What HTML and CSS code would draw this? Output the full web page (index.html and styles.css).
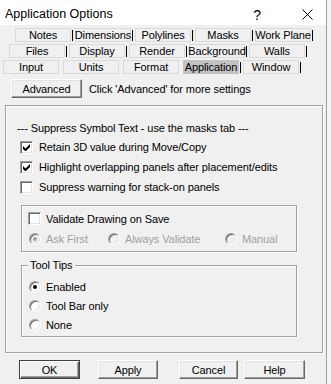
FILE: index.html
```html
<!DOCTYPE html>
<html>
<head>
<meta charset="utf-8">
<link rel="stylesheet" href="styles.css">
</head>
<body>
<div class="window">
  <div class="titlebar">
    <span class="title">Application Options</span>
    <span class="help">?</span>
    <span class="close"><svg width="11" height="11" viewBox="0 0 11 11"><path d="M0.5 0.5 L10.5 10.5 M10.5 0.5 L0.5 10.5" stroke="#000" stroke-width="1" fill="none"/></svg></span>
  </div>
  <div class="tabs">
    <div class="tabrow r1">
      <div class="tab"><span class="lbl">Notes</span><span class="sep"></span></div>
      <div class="tab"><span class="lbl">Dimensions</span><span class="sep"></span></div>
      <div class="tab"><span class="lbl">Polylines</span><span class="sep"></span></div>
      <div class="tab"><span class="lbl">Masks</span><span class="sep"></span></div>
      <div class="tab"><span class="lbl">Work Plane</span><span class="sep"></span></div>
    </div>
    <div class="tabrow r2">
      <div class="tab"><span class="lbl">Files</span><span class="sep"></span></div>
      <div class="tab"><span class="lbl">Display</span><span class="sep"></span></div>
      <div class="tab"><span class="lbl">Render</span><span class="sep"></span></div>
      <div class="tab"><span class="lbl">Background</span><span class="sep"></span></div>
      <div class="tab"><span class="lbl">Walls</span><span class="sep"></span></div>
    </div>
    <div class="tabrow r3">
      <div class="tab"><span class="lbl">Input</span></div>
      <div class="tab"><span class="lbl">Units</span></div>
      <div class="tab"><span class="lbl">Format</span></div>
      <div class="tab"><span class="lbl sel">Application</span><span class="sep"></span></div>
      <div class="tab"><span class="lbl">Window</span><span class="sep"></span></div>
    </div>
  </div>
  <div class="adv-row">
    <div class="btn adv">Advanced</div>
    <span>Click 'Advanced' for more settings</span>
  </div>
  <div class="group outer">
    <div class="note">--- Suppress Symbol Text - use the masks tab ---</div>
    <div class="cbrow first"><span class="cb"><svg width="9" height="9" viewBox="0 0 9 9"><path d="M1 3 L3.5 5.5 L8 1 L8 4 L4 8 L3 8 L1 6 Z" fill="#000"/></svg></span><span>Retain 3D value during Move/Copy</span></div>
    <div class="cbrow"><span class="cb"><svg width="9" height="9" viewBox="0 0 9 9"><path d="M1 3 L3.5 5.5 L8 1 L8 4 L4 8 L3 8 L1 6 Z" fill="#000"/></svg></span><span>Highlight overlapping panels after placement/edits</span></div>
    <div class="cbrow"><span class="cb"></span><span>Suppress warning for stack-on panels</span></div>
    <div class="group validate">
      <div class="cbrow"><span class="cb"></span><span>Validate Drawing on Save</span></div>
      <div class="radios">
        <div class="rd w1 dis"><span class="radio on"></span><span>Ask First</span></div>
        <div class="rd w2 dis"><span class="radio"></span><span>Always Validate</span></div>
        <div class="rd dis"><span class="radio"></span><span>Manual</span></div>
      </div>
    </div>
    <fieldset class="tips">
      <legend>Tool Tips</legend>
      <div class="rd"><span class="radio on"></span><span>Enabled</span></div>
      <div class="rd"><span class="radio"></span><span>Tool Bar only</span></div>
      <div class="rd"><span class="radio"></span><span>None</span></div>
    </fieldset>
  </div>
  <div class="buttons">
    <div class="btn default b-ok">OK</div>
    <div class="btn b-apply">Apply</div>
    <div class="btn b-cancel">Cancel</div>
    <div class="btn b-help">Help</div>
  </div>
</div>
</body>
</html>
```
FILE: styles.css
```css
body {
  margin: 0;
  background: #f4f4f4;
  font-family: "Liberation Sans", Arial, sans-serif;
  font-size: 11px;
  letter-spacing: -0.1px;
  color: #000;
}
.window {
  width: 327px;
  height: 384px;
  box-sizing: border-box;
  background: #f0f0f0;
  border-right: 1px solid #a0a0a0;
  display: flex;
  flex-direction: column;
}
.titlebar {
  height: 25px;
  flex: none;
  background: #fff;
  display: flex;
  align-items: flex-start;
}
.title {
  padding: 3px 0 0 5px;
  line-height: 22px;
  font-size: 12.5px;
  letter-spacing: 0;
}
.help {
  margin-left: auto;
  margin-right: 41px;
  padding-top: 7px;
  font-size: 14px;
  line-height: 16px;
  letter-spacing: 0;
}
.close {
  margin-right: 13px;
  margin-top: 9px;
  display: flex;
}
.tabs {
  display: flex;
  flex-direction: column;
  gap: 2px;
  margin-top: 3px;
}
.tabrow {
  display: flex;
  height: 14px;
}
.r1 { padding-left: 15px; }
.r2 { padding-left: 9px; }
.r3 { padding-left: 3px; }
.tab {
  width: 60px;
  flex: none;
  display: flex;
  align-items: center;
}
.lbl {
  width: 56px;
  height: 14px;
  flex: none;
  box-sizing: border-box;
  border: 1px solid #dadada;
  display: flex;
  align-items: center;
  justify-content: center;
  white-space: nowrap;
}
.lbl.sel {
  background: #c2c2c2;
  border-color: #c2c2c2;
}
.sep {
  width: 1px;
  height: 11px;
  background: #000;
  margin-left: 1px;
  flex: none;
}
.adv-row {
  display: flex;
  align-items: center;
  gap: 7px;
  margin: 5px 0 0 11px;
}
.btn {
  box-sizing: border-box;
  height: 19px;
  display: flex;
  align-items: center;
  justify-content: center;
  background: #f0f0f0;
  border: 1px solid;
  border-color: #fff #696969 #696969 #fff;
  box-shadow: inset -1px -1px 0 #a0a0a0, inset 1px 1px 0 #e3e3e3;
  flex: none;
}
.btn.default {
  border: 1px solid #404040;
  box-shadow: inset 1px 1px 0 #fff, inset -1px -1px 0 #696969, inset -2px -2px 0 #a0a0a0;
}
.adv { width: 71px; }
.group {
  border: 1px solid #a0a0a0;
  box-shadow: inset 1px 1px 0 #fff, 1px 1px 0 #fff;
}
.outer {
  margin: 7px 0 0 5px;
  width: 318px;
  box-sizing: border-box;
  padding: 16px 0 15px 11px;
  display: flex;
  flex-direction: column;
}
.note { line-height: 13px; }
.cbrow {
  display: flex;
  align-items: center;
  gap: 6px;
  height: 20px;
  margin-left: 3px;
}
.cbrow.first { margin-top: 2px; }
.cb {
  width: 13px;
  height: 13px;
  box-sizing: border-box;
  border: 1px solid;
  border-color: #a0a0a0 #fff #fff #a0a0a0;
  box-shadow: inset 1px 1px 0 #696969, inset -1px -1px 0 #e3e3e3;
  background: #fff;
  display: flex;
  align-items: center;
  justify-content: center;
  flex: none;
}
.validate {
  margin: 8px 0 0 4px;
  width: 276px;
  box-sizing: border-box;
  padding: 5px 0 5px 6px;
  display: flex;
  flex-direction: column;
  gap: 5px;
}
.validate .cbrow {
  height: 15px;
  margin-left: 0;
  gap: 5px;
}
.radios {
  display: flex;
  height: 15px;
  margin-left: 1px;
}
.rd {
  display: flex;
  align-items: center;
  gap: 5px;
  height: 19px;
}
.radios .rd { height: 15px; }
.w1 { width: 79px; }
.w2 { width: 117px; }
.radio {
  width: 12px;
  height: 12px;
  box-sizing: border-box;
  border-radius: 50%;
  border: 1px solid;
  border-color: #a0a0a0 #fff #fff #a0a0a0;
  box-shadow: inset 1px 1px 0 #696969, inset -1px -1px 0 #e3e3e3;
  background: #fff;
  display: flex;
  align-items: center;
  justify-content: center;
  flex: none;
}
.radio.on::after {
  content: "";
  width: 4px;
  height: 4px;
  border-radius: 50%;
  background: #000;
}
.dis { color: #a0a0a0; }
.dis .radio { background: #f0f0f0; }
.dis .radio.on::after { background: #a0a0a0; }
.tips {
  margin: 7px 0 0 4px;
  width: 276px;
  min-width: 0;
  box-sizing: border-box;
  padding: 5px 0 2px 7px;
  border: 1px solid #a0a0a0;
  box-shadow: inset 1px 1px 0 #fff, 1px 1px 0 #fff;
}
.tips legend {
  padding: 0 2px;
  margin-left: -1px;
  line-height: 13px;
  background: #f0f0f0;
}
.buttons {
  display: flex;
  margin: 7px 0 0 19px;
}
.b-ok { width: 61px; }
.b-apply { width: 60px; margin-left: 18px; }
.b-cancel { width: 59px; margin-left: 21px; }
.b-help { width: 61px; margin-left: 6px; }
```
